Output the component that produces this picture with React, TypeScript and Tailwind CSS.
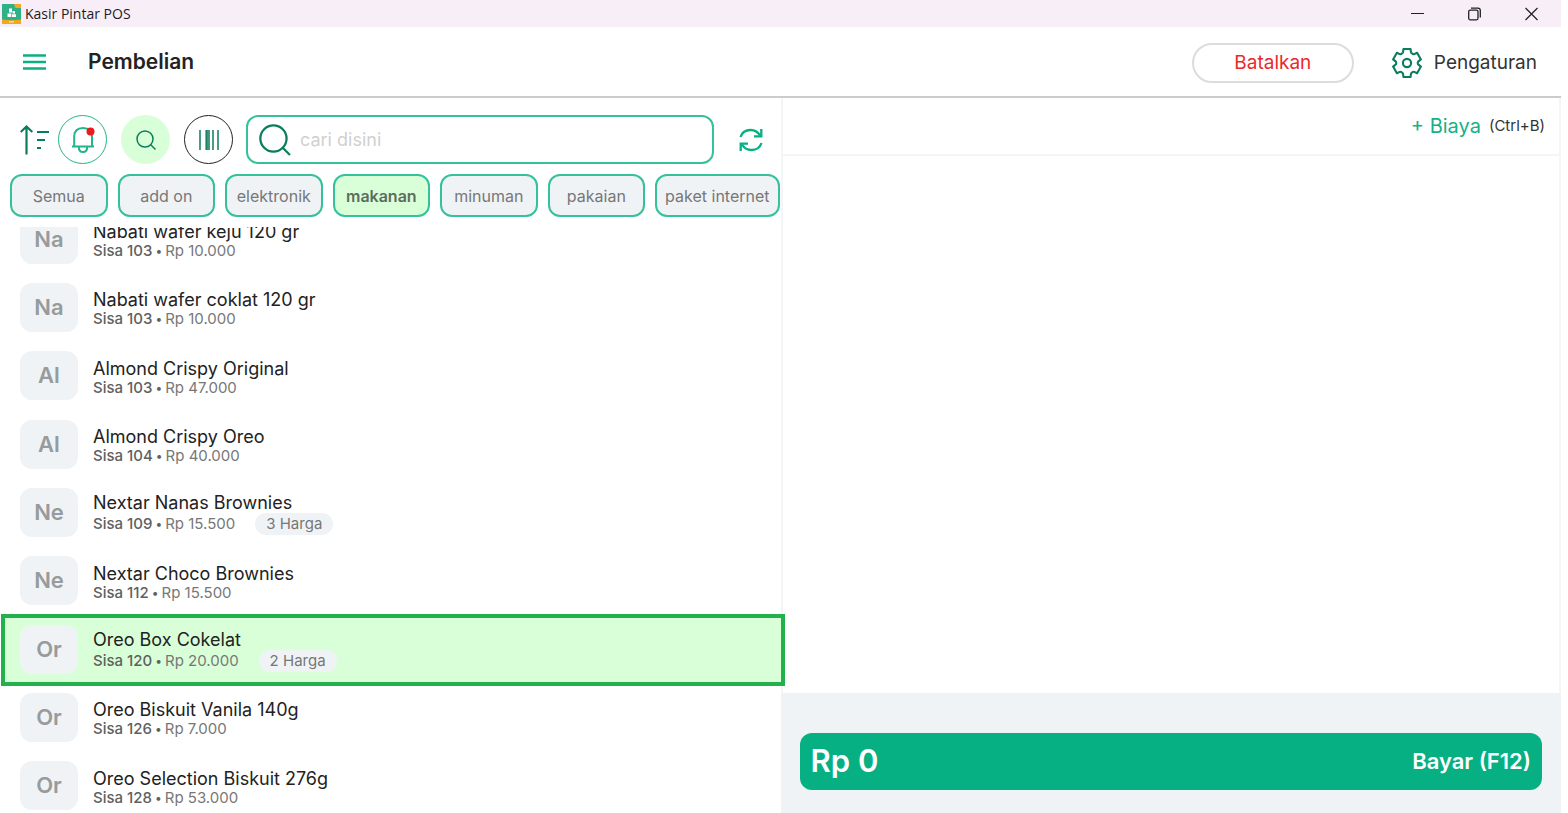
import React, { useState } from 'react';

interface Product {
  name: string;
  stock: number;
  price: string;
  prices?: number;
}

const categories = ['Semua', 'add on', 'elektronik', 'makanan', 'minuman', 'pakaian', 'paket internet'];

const products: Product[] = [
  { name: 'Nabati wafer keju 120 gr', stock: 103, price: '10.000' },
  { name: 'Nabati wafer coklat 120 gr', stock: 103, price: '10.000' },
  { name: 'Almond Crispy Original', stock: 103, price: '47.000' },
  { name: 'Almond Crispy Oreo', stock: 104, price: '40.000' },
  { name: 'Nextar Nanas Brownies', stock: 109, price: '15.500', prices: 3 },
  { name: 'Nextar Choco Brownies', stock: 112, price: '15.500' },
  { name: 'Oreo Box Cokelat', stock: 120, price: '20.000', prices: 2 },
  { name: 'Oreo Biskuit Vanila 140g', stock: 126, price: '7.000' },
  { name: 'Oreo Selection Biskuit 276g', stock: 128, price: '53.000' },
];

const TitleBar = () => (
  <div className="flex h-[27px] shrink-0 items-center justify-between bg-[#f7eef7] pl-[2px] pr-[23px]">
    <div className="flex items-center gap-1">
      <svg width="19" height="20" viewBox="0 0 19 20">
        <rect width="19" height="20" fill="#2fb086" />
        <path d="M12 0h7v4h-5.500z" fill="#f7a823" />
        <path d="M0 15.500q9.500 1.500 19 0V20H0z" fill="#f2a81d" />
        <path d="M7 4.500h3v4H7zM10.500 7h2.500v2.500h-2.500zM5.500 9.500h3.800v3.500H5.500zM10 10.200h4V13h-4z" fill="#fff" />
        <path d="M7 17.700h5" stroke="#fbdca0" strokeWidth="1.500" />
      </svg>
      <span className="font-['Open_Sans',sans-serif] text-[14px] leading-5 text-[#1f1b1f]">Kasir Pintar POS</span>
    </div>
    <div className="flex items-center gap-[44px]">
      <button aria-label="Minimize">
        <svg width="13" height="14" viewBox="0 0 13 14" stroke="#222" fill="none">
          <path d="M0 6.500h13" />
        </svg>
      </button>
      <button aria-label="Restore">
        <svg width="13" height="14" viewBox="0 0 13 14" stroke="#222" strokeWidth="1.300" fill="none">
          <rect x="0.700" y="3.200" width="9.300" height="9.600" rx="1.500" />
          <path d="M3 1.200h7q2.300 0 2.300 2.300v7" />
        </svg>
      </button>
      <button aria-label="Close">
        <svg width="13" height="14" viewBox="0 0 13 14" stroke="#222" strokeWidth="1.200" fill="none">
          <path d="M.5 1l12 12M12.500 1l-12 12" />
        </svg>
      </button>
    </div>
  </div>
);

const Header = () => (
  <header className="flex h-[71px] shrink-0 items-center border-b-2 border-[#cbcbcb] pl-[23px] pr-6">
    <button aria-label="Menu">
      <svg width="23" height="16" viewBox="0 0 23 16" stroke="#0ab083" strokeWidth="2.500">
        <path d="M0 1.500h23M0 8h23M0 14.500h23" />
      </svg>
    </button>
    <h1 className="ml-[42px] text-[21px] font-semibold leading-6 text-[#222]">Pembelian</h1>
    <button className="ml-auto mt-[2px] h-10 w-[162px] rounded-[20px] border-2 border-[#dcdcdc] text-[19px] leading-7 text-[#ea2a2a]">
      Batalkan
    </button>
    <button className="ml-[38px] mt-[2px] flex items-center gap-3 text-[19px] leading-7 text-[#333]">
      <svg width="30" height="30" viewBox="0 0 30 30" fill="none" stroke="#0c7d5c" strokeWidth="2.100" strokeLinejoin="round">
        <path d="M11.500 1h7l.5 3.200q.2.800.9 1.200l1 .6q.7.400 1.400.1l2.800-1.300 3.800 6.600-2.500 2q-.6.500-.6 1.200v.8q0 .7.600 1.200l2.500 2-3.800 6.600-2.800-1.300q-.7-.3-1.400.1l-1 .6q-.7.400-.9 1.200l-.5 3.200h-7l-.5-3.200q-.2-.8-.9-1.200l-1-.6q-.7-.4-1.400-.1l-2.800 1.300-3.800-6.600 2.500-2q.6-.5.600-1.200v-.8q0-.7-.6-1.200l-2.500-2 3.800-6.600 2.800 1.300q.7.300 1.400-.1l1-.6q.7-.4.9-1.200z" />
        <circle cx="15" cy="15" r="4.100" />
      </svg>
      Pengaturan
    </button>
  </header>
);

const Toolbar = () => {
  const [query, setQuery] = useState('');

  return (
    <div className="flex h-[49px] items-center pl-5 pr-[18px]">
      <button aria-label="Urutkan">
        <svg width="29" height="30" viewBox="0 0 29 30" fill="none" stroke="#0c7d5c" strokeWidth="2.200">
          <path d="M6.500 29.500V1.500M.7 7l5.800-5.500L12.300 7M17 7h12M17 15h8M17 23h4" />
        </svg>
      </button>
      <button aria-label="Notifikasi" className="ml-[9px] flex size-[49px] items-center justify-center rounded-full border border-[#22b48b]">
        <svg width="24" height="28" viewBox="0 0 24 28" fill="none" stroke="#22b48b" strokeWidth="2">
          <path d="M1 20.500h22M3.200 20.500V11C3.200 5 6.500 2 12 2s9 3 9 9v9.500M7.800 21c0 3 1.700 5 4.200 5s4.200-2 4.200-5" />
          <circle cx="19.500" cy="5.500" r="4" fill="#e91c1c" stroke="none" />
        </svg>
      </button>
      <button aria-label="Cari" className="ml-[14px] flex size-[49px] items-center justify-center rounded-full bg-[#d9ffd9]">
        <svg width="20" height="20" viewBox="0 0 20 20" fill="none" stroke="#0c7d5c" strokeWidth="1.500">
          <circle cx="9" cy="9" r="8" />
          <path d="M14.500 14.500l5 5" />
        </svg>
      </button>
      <button aria-label="Barcode" className="ml-[14px] flex size-[49px] items-center justify-center rounded-full border border-[#222]">
        <svg width="20" height="20" viewBox="0 0 20 20" stroke="#0c7d5c" strokeWidth="1.500">
          <path d="M1 0v20M7.200 0v20M10 0v20M14 0v20M19 0v20" />
          <path d="M8.700 0v20" strokeWidth="1" />
        </svg>
      </button>
      <label className="ml-[13px] flex h-full flex-1 items-center gap-[9px] rounded-xl border-2 border-[#35c19b] pl-[11px]">
        <svg className="shrink-0" width="32" height="32" viewBox="0 0 31 31" fill="none" stroke="#0c7d5c" strokeWidth="2.200">
          <circle cx="14" cy="14" r="12.700" />
          <path d="M22.500 22.500l7.500 7.500" />
        </svg>
        <input
          type="text"
          aria-label="cari disini"
          placeholder="cari disini"
          value={query}
          onChange={(e) => setQuery(e.target.value)}
          className="w-full text-[18px] text-[#222] outline-none placeholder:text-[#d0d0d0]"
        />
      </label>
      <button aria-label="Muat ulang" className="ml-[25px]">
        <svg width="24" height="24" viewBox="0 0 24 24" fill="none" stroke="#07b083" strokeWidth="2.300">
          <path d="M1.500 9C3 4.500 7 2 11.500 2c4.500 0 7.500 2 9.500 5.500M22.500 15C21 19.500 17 22 12.500 22 8 22 5 20 3 16.500" />
          <path d="M22.300 1v7.300H15M1.700 23v-7.300H9" />
        </svg>
      </button>
    </div>
  );
};

const ProductRow = ({ product, selected }: { product: Product; selected: boolean }) => (
  <li className="relative">
    {selected && <div className="absolute -bottom-[3px] -right-1 -top-px left-px border-4 border-[#22b14c] bg-[#d9ffd9]" />}
    <button className="relative flex h-full w-full items-center gap-[15px] pl-5 text-left">
      <span className="flex h-[49px] w-[58px] items-center justify-center rounded-xl bg-[#eff3f6] text-[22px] font-semibold text-[#979b9c]">
        {product.name.slice(0, 2)}
      </span>
      <span className="flex flex-col pt-1">
        <span className="text-[18px] leading-5 text-[#222]">{product.name}</span>
        <span className="flex items-center text-[15px] leading-[18px] text-[#777]">
          <span className="font-medium text-[#606060]">Sisa {product.stock}</span>
          <span className="mx-[3px] text-[12px] text-[#606060]">•</span>
          <span>Rp {product.price}</span>
          {product.prices && (
            <span className="ml-5 rounded-full bg-[#eff3f6] px-[11px] leading-[22px]">{product.prices} Harga</span>
          )}
        </span>
      </span>
    </button>
  </li>
);

const Cart = () => (
  <section className="flex flex-1 flex-col">
    <div className="flex h-[58px] shrink-0 items-center justify-end gap-2 border-x-2 border-b-2 border-[#f3f5f6] pr-[14px]">
      <button className="text-[20px] text-[#16b287]">+ Biaya</button>
      <span className="text-[15px] text-[#333]">(Ctrl+B)</span>
    </div>
    <div className="flex-1 border-x-2 border-[#f3f5f6]" />
    <div className="bg-[#eff3f6] px-[19px] pb-[23px] pt-10">
      <button className="flex h-[57px] w-full items-center justify-between rounded-xl bg-[#07b083] px-[11px] font-semibold text-white">
        <span className="text-[31px]">Rp 0</span>
        <span className="text-[22px]">Bayar (F12)</span>
      </button>
    </div>
  </section>
);

const App: React.FC = () => {
  const [category, setCategory] = useState('makanan');

  return (
    <div className="flex h-screen flex-col overflow-hidden bg-white pr-[7px] font-[Inter,sans-serif]">
      <TitleBar />
      <Header />
      <main className="flex min-h-0 flex-1">
        <section className="relative z-10 flex flex-1 flex-col gap-[10px] pt-[17px]">
          <Toolbar />
          <nav className="flex gap-[10px] pl-[10px] pr-px">
            {categories.map((item) => (
              <button
                key={item}
                onClick={() => setCategory(item)}
                className={`h-[43px] whitespace-nowrap rounded-xl border-2 border-[#35c19b] text-[16px] last:px-2 not-last:flex-1 ${
                  item === category ? 'bg-[#d9ffd9] font-semibold text-[#5d6d5d]' : 'bg-[#eff3f6] text-[#777]'
                }`}
              >
                {item}
              </button>
            ))}
          </nav>
          <div className="flex min-h-0 flex-1 flex-col overflow-y-clip">
            <ul className="-mb-[7px] -mt-[22px] grid flex-1 auto-rows-fr">
              {products.map((product) => (
                <ProductRow key={product.name} product={product} selected={product.name === 'Oreo Box Cokelat'} />
              ))}
            </ul>
          </div>
        </section>
        <Cart />
      </main>
    </div>
  );
};

export default App;
